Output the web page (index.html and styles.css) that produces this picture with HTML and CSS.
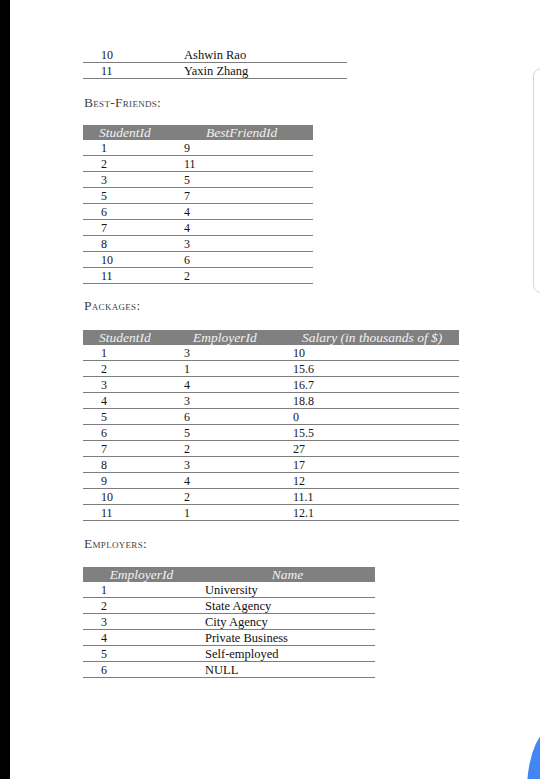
FILE: index.html
```html
<!DOCTYPE html>
<html>
<head>
<meta charset="utf-8">
<link rel="stylesheet" href="styles.css">
</head>
<body>
<div class="page">
  <div class="strip"></div>
  <div class="doc">
    <div class="tbl tbl-top">
      <div class="row"><div class="c c1">10</div><div class="c name">Ashwin Rao</div></div>
      <div class="row"><div class="c c1">11</div><div class="c name">Yaxin Zhang</div></div>
    </div>

    <div class="label l1">Best-Friends:</div>
    <div class="tbl tbl-bf">
      <div class="row head"><div class="c c1 h">StudentId</div><div class="c h bfh">BestFriendId</div></div>
      <div class="row"><div class="c c1">1</div><div class="c">9</div></div>
      <div class="row"><div class="c c1">2</div><div class="c">11</div></div>
      <div class="row"><div class="c c1">3</div><div class="c">5</div></div>
      <div class="row"><div class="c c1">5</div><div class="c">7</div></div>
      <div class="row"><div class="c c1">6</div><div class="c">4</div></div>
      <div class="row"><div class="c c1">7</div><div class="c">4</div></div>
      <div class="row"><div class="c c1">8</div><div class="c">3</div></div>
      <div class="row"><div class="c c1">10</div><div class="c">6</div></div>
      <div class="row"><div class="c c1">11</div><div class="c">2</div></div>
    </div>

    <div class="label l2">Packages:</div>
    <div class="tbl tbl-pk">
      <div class="row head"><div class="c c1 h">StudentId</div><div class="c c2 h ph">EmployerId</div><div class="c h ph">Salary (in thousands of $)</div></div>
      <div class="row"><div class="c c1">1</div><div class="c c2">3</div><div class="c">10</div></div>
      <div class="row"><div class="c c1">2</div><div class="c c2">1</div><div class="c">15.6</div></div>
      <div class="row"><div class="c c1">3</div><div class="c c2">4</div><div class="c">16.7</div></div>
      <div class="row"><div class="c c1">4</div><div class="c c2">3</div><div class="c">18.8</div></div>
      <div class="row"><div class="c c1">5</div><div class="c c2">6</div><div class="c">0</div></div>
      <div class="row"><div class="c c1">6</div><div class="c c2">5</div><div class="c">15.5</div></div>
      <div class="row"><div class="c c1">7</div><div class="c c2">2</div><div class="c">27</div></div>
      <div class="row"><div class="c c1">8</div><div class="c c2">3</div><div class="c">17</div></div>
      <div class="row"><div class="c c1">9</div><div class="c c2">4</div><div class="c">12</div></div>
      <div class="row"><div class="c c1">10</div><div class="c c2">2</div><div class="c">11.1</div></div>
      <div class="row"><div class="c c1">11</div><div class="c c2">1</div><div class="c">12.1</div></div>
    </div>

    <div class="label l3">Employers:</div>
    <div class="tbl tbl-em">
      <div class="row head"><div class="c e1 h center">EmployerId</div><div class="c e2 h center">Name</div></div>
      <div class="row"><div class="c e1">1</div><div class="c e2 name">University</div></div>
      <div class="row"><div class="c e1">2</div><div class="c e2 name">State Agency</div></div>
      <div class="row"><div class="c e1">3</div><div class="c e2 name">City Agency</div></div>
      <div class="row"><div class="c e1">4</div><div class="c e2 name">Private Business</div></div>
      <div class="row"><div class="c e1">5</div><div class="c e2 name">Self-employed</div></div>
      <div class="row"><div class="c e1">6</div><div class="c e2 name">NULL</div></div>
    </div>
  </div>
  <div class="scroll-outline"></div>
  <div class="fab"></div>
</div>
</body>
</html>
```

FILE: styles.css
```css
html, body {
  margin: 0;
  padding: 0;
  background: #ffffff;
}
.page {
  position: relative;
  width: 540px;
  height: 779px;
  overflow: hidden;
  display: flex;
  font-family: "Liberation Serif", "DejaVu Serif", serif;
  color: #151515;
}
.strip {
  width: 10px;
  background: #000;
  flex: none;
}
.doc {
  margin-left: 73px;
  padding-top: 47px;
  display: flex;
  flex-direction: column;
}
.tbl {
  display: flex;
  flex-direction: column;
}
.row {
  display: flex;
  height: 16px;
  box-sizing: border-box;
  border-bottom: 1px solid #7d7d7d;
  align-items: flex-end;
  font-size: 12px;
  line-height: 14px;
}
.row.head {
  height: 15px;
  border-bottom: none;
  background: #808080;
  align-items: center;
}
.c {
  white-space: nowrap;
  box-sizing: border-box;
}
.c1 {
  width: 101px;
  padding-left: 18px;
  flex: none;
}
.c2 {
  width: 109px;
  flex: none;
}
.h {
  font-style: italic;
  color: #f2f2f2;
  font-size: 13.5px;
}
.c1.h { padding-left: 16px; }
.ph { padding-left: 9px; }
.bfh { padding-left: 22px; }
.name {
  font-size: 12.5px;
  color: #111;
}
.tbl-top { width: 264px; }
.tbl-bf { width: 230px; }
.tbl-pk { width: 376px; }
.tbl-em { width: 292px; }
.e1 {
  width: 117px;
  flex: none;
  padding-left: 18px;
}
.e2 {
  flex: 1;
  padding-left: 5px;
}
.center {
  text-align: center;
  padding-left: 0;
}
.e1.center { padding-left: 0; }
.label {
  font-variant: small-caps;
  font-size: 13.5px;
  line-height: 16px;
  color: #444;
  letter-spacing: 0.3px;
  padding-left: 1px;
}
.l1 { margin-top: 16px; margin-bottom: 14px; }
.l2 { margin-top: 14px; margin-bottom: 16px; }
.l3 { margin-top: 15px; margin-bottom: 15px; }
.scroll-outline {
  position: absolute;
  left: 533px;
  top: 68px;
  width: 20px;
  height: 225px;
  border: 1px solid #d6d6d6;
  border-radius: 8px;
  box-sizing: border-box;
}
.fab {
  position: absolute;
  left: 527px;
  top: 725px;
  width: 60px;
  height: 130px;
  border-radius: 50%;
  background: #4285f4;
}
```
